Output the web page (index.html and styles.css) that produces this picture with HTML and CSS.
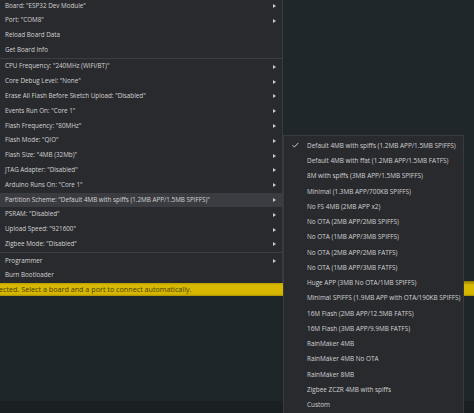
FILE: index.html
```html
<!DOCTYPE html>
<html>
<head>
<meta charset="utf-8">
<link rel="stylesheet" href="styles.css">
</head>
<body>
<div class="app">
  <div class="editor"></div>
  <div class="notice"><span class="notice-text">ected. Select a board and a port to connect automatically.</span></div>
  <div class="output"></div>
  <div class="status"></div>
</div>

<div class="menu main-menu">
  <div class="item sub">Board: "ESP32 Dev Module"</div>
  <div class="item sub">Port: "COM8"</div>
  <div class="item">Reload Board Data</div>
  <div class="item">Get Board Info</div>
  <div class="sep"></div>
  <div class="item sub">CPU Frequency: "240MHz (WiFi/BT)"</div>
  <div class="item sub">Core Debug Level: "None"</div>
  <div class="item sub">Erase All Flash Before Sketch Upload: "Disabled"</div>
  <div class="item sub">Events Run On: "Core 1"</div>
  <div class="item sub">Flash Frequency: "80MHz"</div>
  <div class="item sub">Flash Mode: "QIO"</div>
  <div class="item sub">Flash Size: "4MB (32Mb)"</div>
  <div class="item sub">JTAG Adapter: "Disabled"</div>
  <div class="item sub">Arduino Runs On: "Core 1"</div>
  <div class="item sub active">Partition Scheme: "Default 4MB with spiffs (1.2MB APP/1.5MB SPIFFS)"</div>
  <div class="item sub">PSRAM: "Disabled"</div>
  <div class="item sub">Upload Speed: "921600"</div>
  <div class="item sub">Zigbee Mode: "Disabled"</div>
  <div class="sep"></div>
  <div class="item sub">Programmer</div>
  <div class="item">Burn Bootloader</div>
</div>

<div class="menu sub-menu">
  <div class="sitem checked"><svg class="check" viewBox="0 0 7 6" width="7" height="6"><polyline points="0.6,3.2 2.4,5.1 6.4,0.8" fill="none" stroke="#d6d6d6" stroke-width="0.9"/></svg>Default 4MB with spiffs (1.2MB APP/1.5MB SPIFFS)</div>
  <div class="sitem">Default 4MB with ffat (1.2MB APP/1.5MB FATFS)</div>
  <div class="sitem">8M with spiffs (3MB APP/1.5MB SPIFFS)</div>
  <div class="sitem">Minimal (1.3MB APP/700KB SPIFFS)</div>
  <div class="sitem">No FS 4MB (2MB APP x2)</div>
  <div class="sitem">No OTA (2MB APP/2MB SPIFFS)</div>
  <div class="sitem">No OTA (1MB APP/3MB SPIFFS)</div>
  <div class="sitem">No OTA (2MB APP/2MB FATFS)</div>
  <div class="sitem">No OTA (1MB APP/3MB FATFS)</div>
  <div class="sitem">Huge APP (3MB No OTA/1MB SPIFFS)</div>
  <div class="sitem">Minimal SPIFFS (1.9MB APP with OTA/190KB SPIFFS)</div>
  <div class="sitem">16M Flash (2MB APP/12.5MB FATFS)</div>
  <div class="sitem">16M Flash (3MB APP/9.9MB FATFS)</div>
  <div class="sitem">RainMaker 4MB</div>
  <div class="sitem">RainMaker 4MB No OTA</div>
  <div class="sitem">RainMaker 8MB</div>
  <div class="sitem">Zigbee ZCZR 4MB with spiffs</div>
  <div class="sitem">Custom</div>
</div>
</body>
</html>
```

FILE: styles.css
```css
* { box-sizing: border-box; }
html, body {
  margin: 0;
  padding: 0;
  width: 474px;
  height: 413px;
  overflow: hidden;
  background: #1f2629;
  font-family: "Open Sans", "Noto Sans", sans-serif;
}
.app {
  display: flex;
  flex-direction: column;
  height: 413px;
}
.editor {
  height: 281px;
  background: #20272b;
}
.notice {
  height: 15px;
  background: linear-gradient(#8c7800 0, #b89c00 2px, #d8b900 4px, #d6b600 13px, #a89000 15px);
  display: flex;
  align-items: center;
  overflow: hidden;
  white-space: nowrap;
}
.notice-text {
  font-size: 7.2px;
  color: #4a3e00;
  margin-left: -1px;
}
.output {
  flex: 1;
  background: #1f2629;
}
.status {
  height: 12px;
  background: #1a1f22;
}
.menu {
  position: absolute;
  background: #292a2e;
  color: #d2d2d2;
  white-space: nowrap;
}
.main-menu {
  left: 0;
  top: -1.5px;
  width: 283px;
  border-right: 1px solid #3a3b3f;
}
.item {
  position: relative;
  height: 14.8px;
  line-height: 14.8px;
  padding-left: 5px;
  font-size: 6.3px;
}
.item.active {
  background: #3b3c41;
}
.item.sub::after {
  content: "";
  position: absolute;
  right: 6px;
  top: 5.4px;
  border-left: 3px solid #c9c9c9;
  border-top: 2px solid transparent;
  border-bottom: 2px solid transparent;
}
.sep {
  height: 1px;
  margin: 0.4px 0;
  background: #3d3e43;
}
.sub-menu {
  left: 283px;
  top: 135px;
  width: 181px;
  height: 290px;
  border: 1px solid #3a3b3f;
  padding-top: 1.8px;
}
.sitem {
  position: relative;
  height: 15.25px;
  line-height: 15.25px;
  padding-left: 23px;
  font-size: 6.4px;
}
.check {
  position: absolute;
  left: 8px;
  top: 4.5px;
}
```
